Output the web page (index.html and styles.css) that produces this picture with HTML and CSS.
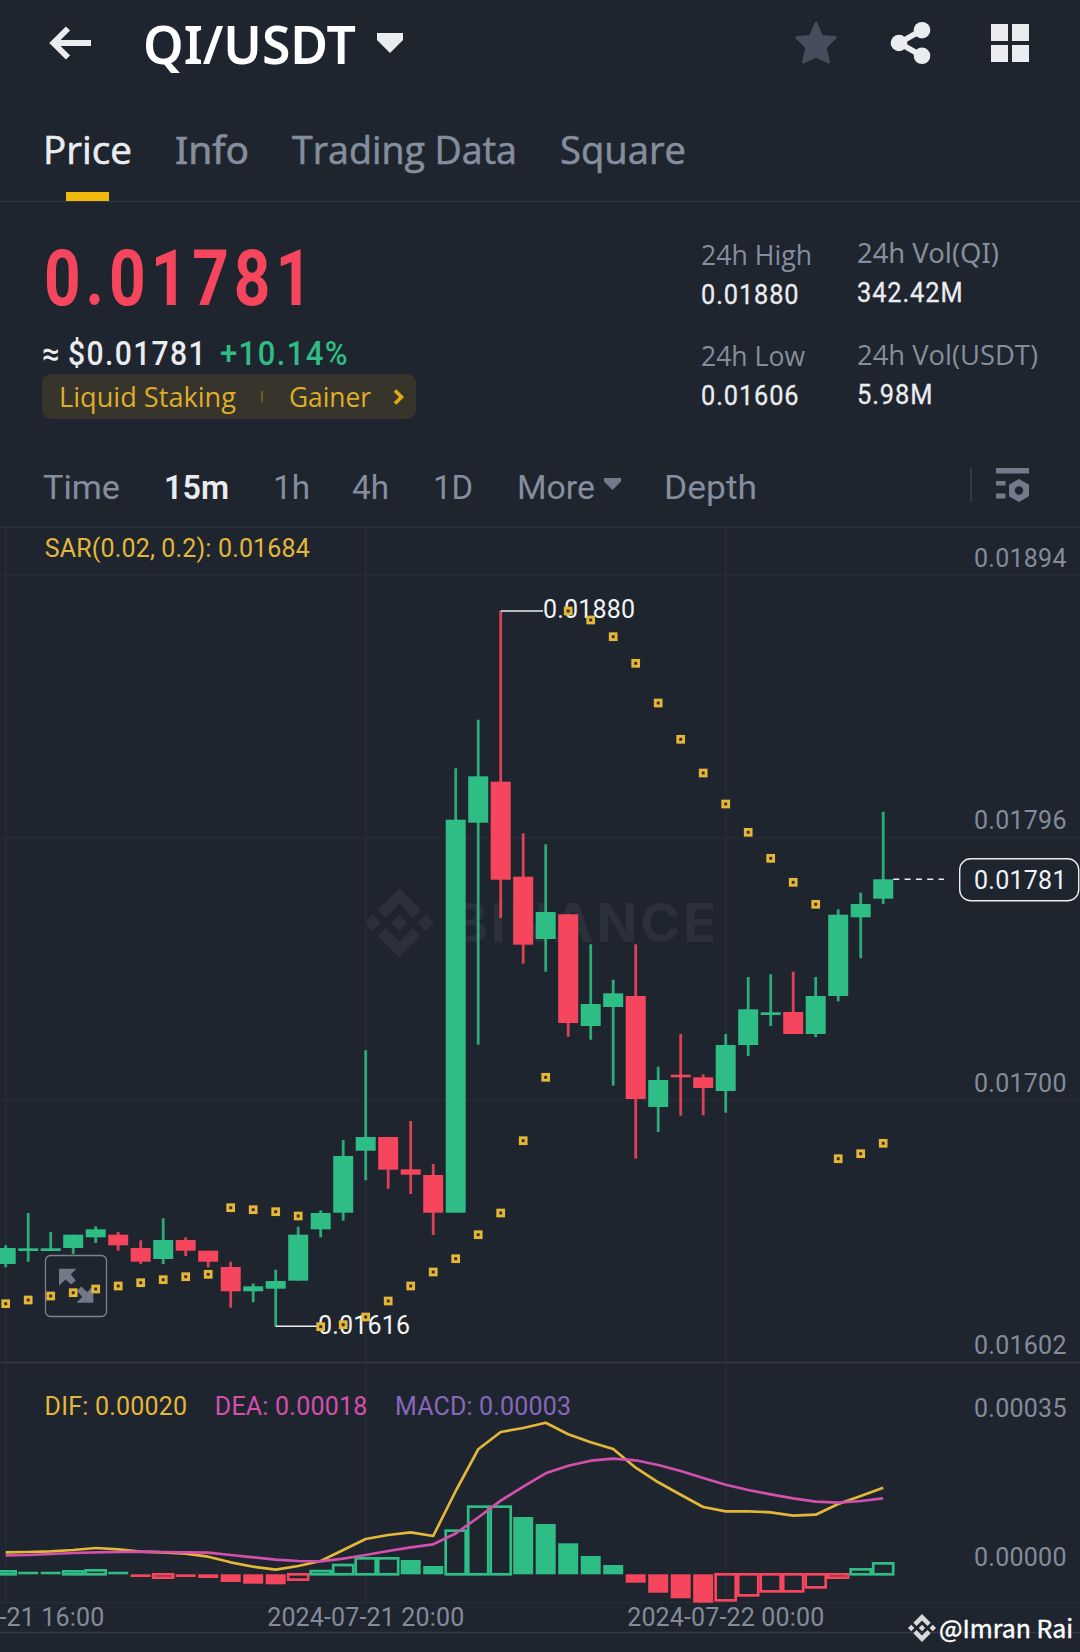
FILE: index.html
```html
<!DOCTYPE html>
<html lang="en">
<head>
    <meta charset="UTF-8">
    <meta name="viewport" content="width=device-width, initial-scale=1.0">
    <title>QI/USDT</title>
    <link rel="stylesheet" href="styles.css">
</head>
<body>
    <header class="topbar">
        <svg class="back" width="44" height="36" viewBox="0 0 44 36">
            <path d="M42 18H5M19 3.5L4.5 18L19 32.5" fill="none" stroke="#eaecef" stroke-width="6"/>
        </svg>
        <h1 class="pair"><span data-fit="213">QI/USDT</span></h1>
        <svg class="pair-caret" width="26" height="20" viewBox="0 0 26 20">
            <path d="M0 0H26V7L13 20L0 7Z" fill="#eaecef"/>
        </svg>
        <div class="actions">
            <svg width="44" height="44" viewBox="0 0 44 44">
                <path d="M22 2.5L27.3 15.4L41 16.5L31 26.5L34.5 41L22 35L9.5 41L13 26.5L3 16.5L16.7 15.4Z" fill="#474d5c" stroke="#474d5c" stroke-width="3" stroke-linejoin="round"/>
            </svg>
            <svg width="42" height="44" viewBox="0 0 42 44">
                <path d="M32 9L9 22L32 35" fill="none" stroke="#eaecef" stroke-width="5.5"/>
                <circle cx="9" cy="22" r="8.3" fill="#eaecef"/>
                <circle cx="32" cy="9.2" r="8.3" fill="#eaecef"/>
                <circle cx="32" cy="34.8" r="8.3" fill="#eaecef"/>
            </svg>
            <svg width="38" height="38" viewBox="0 0 38 38">
                <path d="M0 0H17V17H0ZM21 0H38V17H21ZM0 21H17V38H0ZM21 21H38V38H21Z" fill="#eaecef"/>
            </svg>
        </div>
    </header>

    <nav class="tabs">
        <a class="tab active"><span data-fit="89">Price</span></a>
        <a class="tab alt"><span data-fit="74">Info</span></a>
        <a class="tab"><span data-fit="225">Trading Data</span></a>
        <a class="tab"><span data-fit="126">Square</span></a>
    </nav>

    <section class="summary">
        <div class="quote">
            <div class="price"><span data-fit="273">0.01781</span></div>
            <div class="sub">
                <span data-fit="19">≈</span>
                <span class="usd" data-fit="139">$0.01781</span>
                <span class="change" data-fit="129">+10.14%</span>
            </div>
            <div class="tags">
                <span class="tag-name" data-fit="177">Liquid Staking</span>
                <i class="tag-sep"></i>
                <span class="tag-name" data-fit="82">Gainer</span>
                <svg width="12" height="16" viewBox="0 0 12 16">
                    <path d="M2 1.5L8.5 8L2 14.5" fill="none" stroke="#e3a90f" stroke-width="3.6"/>
                </svg>
            </div>
        </div>
        <div class="stats">
            <div class="stat-col first">
                <dl><dt><span data-fit="111">24h High</span></dt><dd><span data-fit="98.5">0.01880</span></dd></dl>
                <dl><dt><span data-fit="104">24h Low</span></dt><dd><span data-fit="98.5">0.01606</span></dd></dl>
            </div>
            <div class="stat-col">
                <dl><dt class="alt"><span data-fit="142">24h Vol(QI)</span></dt><dd><span data-fit="106.5">342.42M</span></dd></dl>
                <dl><dt><span data-fit="181">24h Vol(USDT)</span></dt><dd><span data-fit="76.5">5.98M</span></dd></dl>
            </div>
        </div>
    </section>

    <div class="frames">
        <span class="frame f-time"><span data-fit="77">Time</span></span>
        <span class="frame f-15 active"><span data-fit="65">15m</span></span>
        <span class="frame f-1h"><span data-fit="37">1h</span></span>
        <span class="frame f-4h"><span data-fit="37">4h</span></span>
        <span class="frame f-1d"><span data-fit="40">1D</span></span>
        <span class="frame f-more"><span data-fit="78">More</span>
            <svg width="17" height="12" viewBox="0 0 17 12"><path d="M0 0H17V3.5L8.5 12L0 3.5Z" fill="#747a8b"/></svg>
        </span>
        <span class="frame f-depth"><span data-fit="93">Depth</span></span>
        <i class="divider"></i>
        <svg width="34" height="36" viewBox="0 0 34 36" fill="#747a8b">
            <path d="M0 1H33V6.5H0ZM0 14H9.5V18.5H0ZM0 26.5H9.5V31.5H0Z"/>
            <path fill-rule="evenodd" d="M23 12L33 17.8V29.2L23 35L13 29.2V17.8ZM23 19.3A4.2 4.2 0 1 0 23 27.7A4.2 4.2 0 1 0 23 19.3Z"/>
        </svg>
    </div>

    <main class="chart-wrap">
        <svg id="chart" width="1080" height="1124" viewBox="0 528 1080 1124">
            <g class="grid">
                <path d="M5.7 528V1602M365.7 528V1602M725.7 528V1602M0 575.5H1080M0 838H1080M0 1100H1080M0 1602.5H1080"/>
            </g>
            <path class="pane-line" d="M0 1362.5H1080M0 1632.5H1080"/>

            <g class="watermark">
                <g transform="translate(399.3 922.7) scale(34.7)">
                    <path d="M0 -1L.62 -.38L.39 -.15L0 -.54L-.39 -.15L-.62 -.38ZM0 1L.62 .38L.39 .15L0 .54L-.39 .15L-.62 .38ZM0 -.23L.23 0L0 .23L-.23 0ZM-.77 -.23L-.54 0L-.77 .23L-1 0ZM.77 -.23L1 0L.77 .23L.54 0Z"/>
                </g>
                <text x="452" y="942" textLength="264">BINANCE</text>
            </g>

            <g id="candles"></g>

            <g class="expand">
                <rect x="45.5" y="1255.5" width="61" height="61" rx="5"/>
                <path d="M59 1268.7H76.5L70.8 1274.4L75.8 1280.4L71.2 1284.6L65.6 1279.4L59 1285.7ZM93.3 1302.7H76.5L82.2 1297L77 1291L81.3 1286.5L87 1292L93.3 1286Z"/>
            </g>

            <g class="extreme">
                <path d="M500.7 611H543M275.7 1326.3H319"/>
                <text x="543" y="618" textLength="92">0.01880</text>
                <text x="318" y="1334" textLength="92">0.01616</text>
            </g>
            <g id="sar"></g>

            <g class="axis">
                <text x="974" y="567" textLength="92.5">0.01894</text>
                <text x="974" y="829" textLength="92.5">0.01796</text>
                <text x="974" y="1092.3" textLength="92.5">0.01700</text>
                <text x="974" y="1354.3" textLength="92.5">0.01602</text>
                <text x="974" y="1417.2" textLength="92.5">0.00035</text>
                <text x="974" y="1566" textLength="92.5">0.00000</text>
                <text x="-92.8" y="1626.3" textLength="197">2024-07-21 16:00</text>
                <text x="267.2" y="1626.3" textLength="197">2024-07-21 20:00</text>
                <text x="627.2" y="1626.3" textLength="197">2024-07-22 00:00</text>
            </g>

            <g class="last">
                <path d="M893.3 879.3H944" stroke-dasharray="6 5.3"/>
                <rect x="959.7" y="858.7" width="119" height="42" rx="11"/>
                <text x="974" y="889.2" textLength="92.5">0.01781</text>
            </g>

            <text class="legend sar-color" x="44.8" y="557" textLength="265">SAR(0.02, 0.2): 0.01684</text>
            <text class="legend sar-color" x="44.6" y="1415.3" textLength="142.5">DIF: 0.00020</text>
            <text class="legend dea-color" x="214.8" y="1415.3" textLength="152.5">DEA: 0.00018</text>
            <text class="legend macd-color" x="395" y="1415.3" textLength="176">MACD: 0.00003</text>

            <g id="macd"></g>
            <path id="dif" class="line sar-stroke"/>
            <path id="dea" class="line dea-stroke"/>
        </svg>
        <div class="author">
            <svg width="28" height="28" viewBox="-1 -1 2 2">
                <path fill="#d8d9db" d="M0 -1L.62 -.38L.39 -.15L0 -.54L-.39 -.15L-.62 -.38ZM0 1L.62 .38L.39 .15L0 .54L-.39 .15L-.62 .38ZM0 -.23L.23 0L0 .23L-.23 0ZM-.77 -.23L-.54 0L-.77 .23L-1 0ZM.77 -.23L1 0L.77 .23L.54 0Z"/>
            </svg>
            <span data-fit="134">@Imran Rai</span>
        </div>
    </main>

    <script src="chart.js"></script>
</body>
</html>
```
FILE: styles.css
```css
* {
    margin: 0;
    padding: 0;
    box-sizing: border-box;
}

body {
    width: 1080px;
    height: 1652px;
    background: #1f252f;
    color: #eaecef;
    font-family: Roboto, "Open Sans", sans-serif;
    overflow: hidden;
}

svg {
    display: block;
    flex: none;
}

[data-fit] {
    display: inline-block;
    white-space: nowrap;
    transform-origin: 0 50%;
}

.topbar {
    height: 86px;
    padding: 0 51px 0 49px;
    display: flex;
    align-items: center;
}

.pair {
    margin-left: 50px;
    padding-top: 1px;
    font: 600 51.5px/60px "Noto Sans", sans-serif;
    color: #fff;
}

.pair-caret {
    margin-left: 21px;
}

.actions {
    margin-left: auto;
    display: flex;
    align-items: center;
}

.actions svg:nth-child(2) {
    margin-left: 52px;
}

.actions svg:nth-child(3) {
    margin-left: 59px;
}

.tabs {
    height: 116px;
    padding: 38px 0 0 43px;
    display: flex;
    gap: 43px;
    border-bottom: 1px solid #303741;
}

.tab {
    position: relative;
    height: 77px;
    font: 400 38px/51px "Open Sans", sans-serif;
    -webkit-text-stroke: .6px;
    color: #848e9c;
}

.tab.alt {
    font-family: "Noto Sans", sans-serif;
}

.tab.active {
    color: #eaecef;
}

.tab.active::after {
    content: '';
    position: absolute;
    left: 23px;
    bottom: 0;
    width: 43px;
    height: 9px;
    background: #f0b90b;
}

.summary {
    height: 242px;
    padding-left: 42px;
    display: flex;
}

.quote {
    width: 659px;
    padding-top: 37px;
}

.price {
    padding-left: 2px;
    font-size: 78px;
    font-weight: 700;
    line-height: 80px;
    letter-spacing: 6px;
    color: #f6465d;
}

.sub {
    margin-top: 14px;
    display: flex;
    font-size: 33px;
    font-weight: 500;
    line-height: 42px;
    letter-spacing: 1.5px;
}

.usd {
    margin-left: 7px;
}

.change {
    margin-left: 13px;
    color: #2ebd85;
}

.tags {
    width: 374px;
    height: 45px;
    margin-top: -1px;
    padding-left: 17px;
    display: flex;
    align-items: center;
    border-radius: 9px;
    background: #37342b;
    color: #dfae29;
    font: 400 27px/40px "Open Sans", sans-serif;
}

.tag-sep {
    width: 2px;
    height: 11px;
    margin: 0 26px 0 25px;
    background: #6b5a28;
}

.tags svg {
    margin-left: 22px;
}

.stats {
    display: flex;
    padding-top: 31px;
}

.stat-col {
    width: 190px;
    display: flex;
    flex-direction: column;
    gap: 21.5px;
}

.stat-col.first {
    width: 156px;
    padding-top: 1.5px;
}

.stats dt {
    height: 40px;
    font-size: 27px;
    line-height: 40px;
    color: #848e9c;
    font-family: "Open Sans", sans-serif;
}

.stats dt.alt {
    font-family: "Noto Sans", sans-serif;
}

.stats dd {
    height: 40px;
    font-size: 27.5px;
    line-height: 40px;
    letter-spacing: 1px;
    -webkit-text-stroke: .3px;
}

.frames {
    height: 84px;
    padding: 0 50px 0 43px;
    display: flex;
    align-items: center;
    border-bottom: 2px solid #292f39;
}

.frame {
    display: flex;
    align-items: center;
    font-size: 33px;
    line-height: 42px;
    color: #848e9c;
    padding-top: 6px;
}

.frame.active {
    font-weight: 600;
    color: #eaecef;
}

.f-15 { margin-left: 44px; }
.f-1h { margin-left: 44px; }
.f-4h { margin-left: 42px; }
.f-1d { margin-left: 44px; }
.f-more { margin-left: 44px; }
.f-depth { margin-left: 43px; }

.f-more svg {
    margin: -9px 0 0 9px;
}

.divider {
    width: 2px;
    height: 34px;
    margin-left: auto;
    margin-right: 24px;
    background: #333944;
}

.chart-wrap {
    position: relative;
    height: 1124px;
}

#chart text {
    font-family: Roboto, sans-serif;
    font-size: 25px;
}

.grid path {
    fill: none;
    stroke: #262c36;
    stroke-width: 1.5;
}

.pane-line {
    stroke: #343a45;
    stroke-width: 1.3;
}

.watermark {
    fill: #2b303b;
}

#chart .watermark text {
    font-family: Inter, sans-serif;
    font-size: 54px;
    font-weight: 700;
}

.up {
    fill: #2ebd85;
    stroke: #2ebd85;
}

.down {
    fill: #f6465d;
    stroke: #f6465d;
}

.solid {
    stroke: none;
}

.hollow {
    fill: none;
    stroke-width: 2.7;
}

.wick {
    stroke-width: 2.8;
    opacity: .88;
}

.sar-dot {
    fill: #3d2a12;
    stroke: #e3b73a;
    stroke-width: 2.9;
}

.expand rect {
    fill: none;
    stroke: #7c8290;
    stroke-width: 1.3;
}

.expand path {
    fill: #717887;
}

.extreme path {
    stroke: #eaecef;
    stroke-width: 1.5;
}

.extreme text,
.last text {
    fill: #f2f3f5;
}

.axis text {
    fill: #848b99;
}

.last path,
.last rect {
    fill: none;
    stroke: #eaecef;
    stroke-width: 1.4;
}

.sar-color { fill: #e3b73a; }
.dea-color { fill: #d350ac; }
.macd-color { fill: #8768bd; }

.line {
    fill: none;
    stroke-width: 2.7;
    stroke-linejoin: round;
}

.sar-stroke { stroke: #e3b73a; }
.dea-stroke { stroke: #d350ac; }

.author {
    position: absolute;
    right: 7px;
    bottom: 8px;
    display: flex;
    align-items: center;
    gap: 3px;
    height: 32px;
    color: #fff;
    font: 400 24.5px/30px "Noto Sans CJK SC", sans-serif;
    -webkit-text-stroke: .4px;
}

.author span {
    margin-top: -1px;
}
```
FILE: chart.js
```js
const SVG_NS = 'http://www.w3.org/2000/svg';
const STEP = 22.5;
const START = 5.7;

// direction, body top, body bottom, high, low
const candles = [
    ['up', 1248, 1264, 1245.3, 1267.3], ['up', 1248.3, 1251, 1213, 1261.7],
    ['up', 1248.3, 1251, 1232, 1250], ['up', 1234.7, 1248, 1234.7, 1254],
    ['up', 1229.3, 1237.3, 1226.3, 1243], ['down', 1234.7, 1245.3, 1232, 1250.7],
    ['down', 1248, 1261.7, 1240.3, 1264], ['up', 1240, 1259, 1218.3, 1264],
    ['down', 1240, 1250.7, 1237.3, 1256], ['down', 1250.7, 1261.7, 1250.7, 1267.3],
    ['down', 1267, 1291.3, 1261.7, 1307.7], ['up', 1286.3, 1291.3, 1283.3, 1302.3],
    ['up', 1281, 1288.7, 1269.7, 1326.7], ['up', 1234.7, 1280.7, 1226.7, 1280.7],
    ['up', 1213, 1229.3, 1210.3, 1237.3], ['up', 1156, 1212.7, 1140, 1220.7],
    ['up', 1137, 1150.7, 1050.3, 1180.3], ['down', 1137, 1169.7, 1137, 1188.7],
    ['down', 1169.3, 1174.7, 1121, 1194], ['down', 1175, 1212.7, 1164, 1235],
    ['up', 819.7, 1212.7, 768.3, 1212.7], ['up', 776.3, 822.7, 719.7, 1044.7],
    ['down', 781.7, 879.7, 611, 918], ['down', 876.7, 944.7, 833.3, 963.7],
    ['up', 912, 939, 844.3, 971.7], ['down', 914.3, 1023, 914.3, 1036.7],
    ['up', 1004, 1026, 944.3, 1039.7], ['up', 993.3, 1007, 979.7, 1085.7],
    ['down', 996, 1099, 944.3, 1158.7], ['up', 1080, 1107, 1066.7, 1132],
    ['down', 1074.7, 1077.3, 1034, 1115.7], ['down', 1077.3, 1088, 1074.3, 1115.3],
    ['up', 1045, 1091, 1034, 1112.7], ['up', 1009.3, 1045, 977, 1056],
    ['up', 1012.3, 1015, 974.3, 1026], ['down', 1012, 1034, 971.7, 1034],
    ['up', 996, 1034, 977, 1037], ['up', 914.7, 996, 909.3, 1001.3],
    ['up', 904, 917.3, 892.7, 958.3], ['up', 879.3, 898.7, 811.7, 904]
];

const sar = [
    1303.7, 1300, 1296, 1292.7, 1289, 1286, 1282.7, 1279.7, 1276.7, 1274.3,
    1207.7, 1209.7, 1211.7, 1216, 1326.7, 1324.7, 1317, 1301, 1286, 1272,
    1258.7, 1234.7, 1213, 1140.7, 1077.3, 611, 620, 636.7, 663.3, 703,
    739.3, 773, 804, 832.3, 858.3, 882.3, 904.3, 1158.7, 1153.7, 1143.3
];

// direction, style, outer edge
const macd = [
    ['up', 'hollow', 1570], ['up', 'solid', 1571.7], ['up', 'solid', 1571.7], ['up', 'hollow', 1570],
    ['up', 'hollow', 1569], ['up', 'solid', 1571.7], ['down', 'solid', 1577], ['down', 'hollow', 1579],
    ['down', 'solid', 1577], ['down', 'solid', 1578], ['down', 'solid', 1582], ['down', 'solid', 1583.7],
    ['down', 'solid', 1584.3], ['down', 'hollow', 1581], ['up', 'hollow', 1569.7], ['up', 'hollow', 1563.7],
    ['up', 'hollow', 1557], ['up', 'hollow', 1557], ['up', 'solid', 1560], ['up', 'solid', 1566],
    ['up', 'hollow', 1529.3], ['up', 'hollow', 1505.3], ['up', 'hollow', 1505.3], ['up', 'solid', 1517],
    ['up', 'solid', 1524], ['up', 'solid', 1543.3], ['up', 'solid', 1556], ['up', 'solid', 1565],
    ['down', 'solid', 1582.7], ['down', 'solid', 1592.7], ['down', 'solid', 1598.3], ['down', 'solid', 1602.7],
    ['down', 'hollow', 1601.7], ['down', 'hollow', 1596.7], ['down', 'hollow', 1592.7], ['down', 'hollow', 1592.7],
    ['down', 'hollow', 1588.7], ['down', 'hollow', 1579], ['up', 'hollow', 1568], ['up', 'hollow', 1562]
];

const dif = [
    1552.3, 1552, 1551.3, 1550, 1548, 1549.3, 1551.7, 1552.3, 1553.7, 1556.7,
    1562.3, 1566.7, 1569.7, 1566, 1561, 1550, 1539, 1535, 1532.3, 1536,
    1491, 1449.3, 1432, 1428, 1422.7, 1434.3, 1442.3, 1449, 1467.7, 1482.3,
    1494.7, 1507, 1511.3, 1511.3, 1512.3, 1515.7, 1514.7, 1504, 1496, 1487.7
];

const dea = [
    1555.3, 1555, 1554, 1553, 1552.3, 1552, 1551.7, 1552, 1552.3, 1552.7,
    1555, 1557.3, 1559.7, 1561, 1561.3, 1558.7, 1555, 1551, 1547.3, 1544.3,
    1533.5, 1517.5, 1500.7, 1486.7, 1473.3, 1465.7, 1460.7, 1458.7, 1460.3, 1465,
    1471, 1478, 1484.7, 1490, 1494.3, 1498.3, 1501.7, 1502.7, 1501, 1498.3
];

function xAt(i) {
    return START + i * STEP;
}

function addRect(parent, cls, x, y, w, h) {
    const rect = document.createElementNS(SVG_NS, 'rect');
    rect.setAttribute('class', cls);
    rect.setAttribute('x', x);
    rect.setAttribute('y', y);
    rect.setAttribute('width', w);
    rect.setAttribute('height', h);
    parent.appendChild(rect);
}

function drawCandles() {
    const group = document.getElementById('candles');
    candles.forEach(([dir, top, bottom, high, low], i) => {
        const x = xAt(i);
        const wick = document.createElementNS(SVG_NS, 'path');
        wick.setAttribute('class', dir + ' wick');
        wick.setAttribute('d', `M${x} ${high}V${low}`);
        group.appendChild(wick);
        addRect(group, dir + ' solid', x - 10, top, 20, bottom - top);
    });
}

function drawSar() {
    const group = document.getElementById('sar');
    sar.forEach((y, i) => addRect(group, 'sar-dot', xAt(i) - 2.9, y - 2.9, 5.8, 5.8));
}

function drawMacd() {
    const group = document.getElementById('macd');
    macd.forEach(([dir, style, edge], i) => {
        const up = dir === 'up';
        let base = 1574.3;
        let end = edge;
        if (style === 'hollow') {
            end = up ? edge + 1.35 : edge - 1.35;
        }
        addRect(group, dir + ' ' + style, xAt(i) - 10, Math.min(base, end), 20, Math.abs(base - end));
    });
}

function drawLine(id, values) {
    const d = values.map((y, i) => (i ? 'L' : 'M') + xAt(i) + ' ' + y).join('');
    document.getElementById(id).setAttribute('d', d);
}

function fitLabels() {
    document.querySelectorAll('[data-fit]').forEach(el => {
        const natural = el.getBoundingClientRect().width;
        const width = Number(el.dataset.fit);
        el.style.transform = `scaleX(${width / natural})`;
        el.style.marginRight = (width - natural) + 'px';
    });
}

drawCandles();
drawSar();
drawMacd();
drawLine('dif', dif);
drawLine('dea', dea);
fitLabels();
```
